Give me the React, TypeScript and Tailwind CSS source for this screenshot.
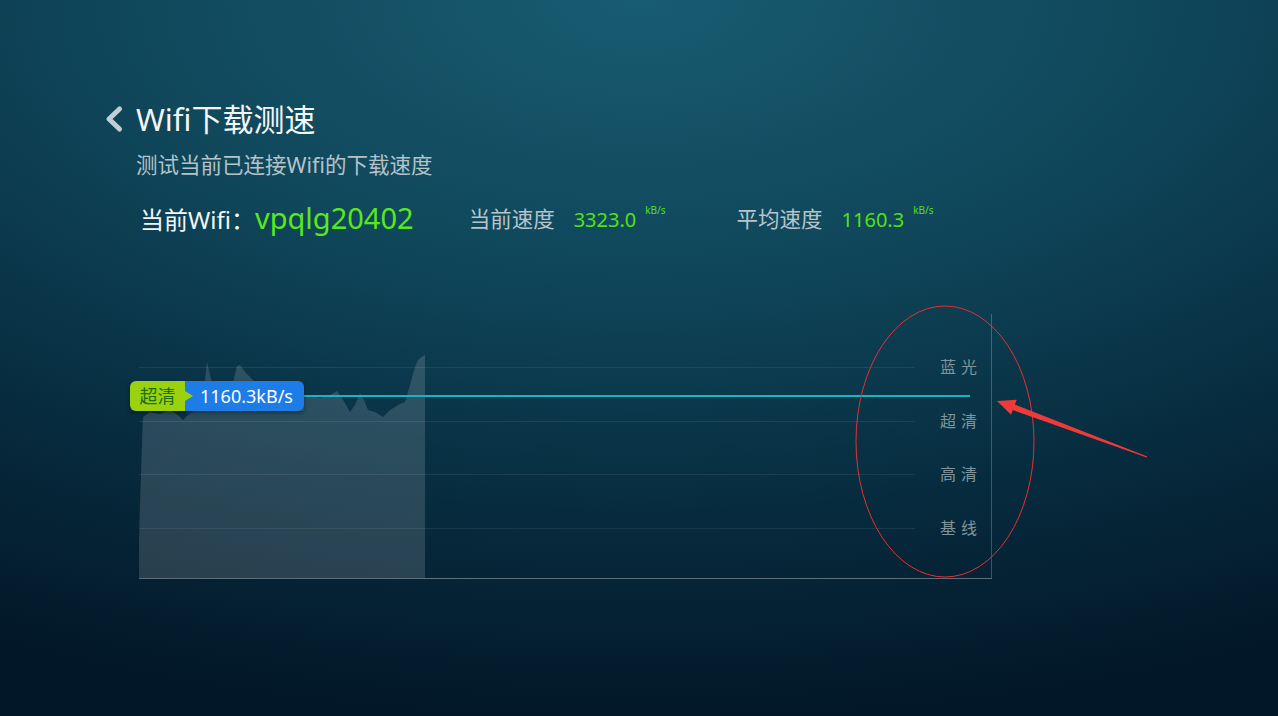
import React from 'react'

const profile: [number, number][] = [
  [139, 578], [139, 540], [140, 505], [141, 475], [142, 440], [143, 417], [150, 412], [160, 414],
  [170, 410], [178, 415], [183, 420], [190, 413], [200, 408], [205, 380], [207, 362], [210, 375],
  [215, 395], [222, 405], [230, 395], [237, 366], [240, 365], [245, 372], [253, 380], [260, 395],
  [270, 400], [285, 398], [300, 400], [310, 396], [320, 398], [330, 395], [337, 391], [342, 398],
  [350, 412], [355, 405], [360, 393], [364, 400], [368, 410], [375, 412], [383, 417], [390, 410],
  [395, 407], [400, 404], [405, 402], [410, 385], [414, 370], [417, 362], [420, 358], [425, 355],
  [425, 578],
]

// chart origin on the page
const OX = 139
const OY = 314

const areaPoints = profile.map(([x, y]) => `${x - OX},${y - OY}`).join(' ')

const levels = [
  { label: '蓝光', y: 53 },
  { label: '超清', y: 107 },
  { label: '高清', y: 160 },
  { label: '基线', y: 214 },
]

function SpeedChart() {
  return (
    <div className="relative ml-[139px] h-[266px] w-[853px]">
      <svg width="853" height="266" className="block">
        {levels.map(l => (
          <line key={l.label} x1="0" x2="776" y1={l.y + 0.5} y2={l.y + 0.5} stroke="#ffffff" strokeOpacity="0.08" />
        ))}
        <polygon points={areaPoints} fill="#ffffff" fillOpacity="0.14" />
        <line x1="0" x2="831" y1="82" y2="82" stroke="#1bb3c2" strokeWidth="2" />
        <line x1="852.5" x2="852.5" y1="0" y2="264" stroke="#ffffff" strokeOpacity="0.22" />
        <line x1="0" x2="853" y1="264.5" y2="264.5" stroke="#ffffff" strokeOpacity="0.35" />
      </svg>

      {levels.map(l => (
        <span
          key={l.label}
          className="absolute left-[801px] text-[16px] leading-[24px] tracking-[5px] text-[#7f949c]"
          style={{ top: l.y - 12 }}
        >
          {l.label}
        </span>
      ))}

      <div className="absolute left-[-9px] top-[67px] flex h-[30px] shadow-[0_2px_4px_rgba(0,0,0,0.35)]">
        <div className="relative flex w-[55px] items-center justify-center rounded-l-[6px] bg-[#9bd20f] text-[18px] text-[#1c6e0c]">
          超清
          <span className="absolute right-[-8px] top-[10px] h-0 w-0 border-y-[5px] border-l-[8px] border-y-transparent border-l-[#9bd20f]" />
        </div>
        <div className="flex w-[119px] items-center justify-center rounded-r-[6px] bg-[#1d7ce6] pl-[4px] text-[18px] text-white">
          1160.3kB/s
        </div>
      </div>
    </div>
  )
}

function Stat({ label, value, gap }: { label: string; value: string; gap: string }) {
  return (
    <div className={`relative top-[-2px] flex items-baseline ${gap}`}>
      <span className="text-[21.5px] text-[#b6c5ca]">{label}</span>
      <span className="ml-[19px] text-[20px] text-[#55e014]">{value}</span>
      <span className="ml-[9px] self-start pt-[4px] text-[10px] leading-[10px] text-[#55e014]">kB/s</span>
    </div>
  )
}

export default function App() {
  return (
    <div className="relative h-[716px] w-[1278px] overflow-hidden bg-[radial-gradient(ellipse_110%_100%_at_50%_0%,#185c71_0%,#0f4559_40%,#072b3e_72%,#021828_100%)] font-['Noto_Sans','Noto_Sans_CJK_SC',sans-serif]">
      <div className="pl-[104px] pt-[99px]">
        <div className="flex items-center">
          <svg width="20" height="28" viewBox="0 0 20 28" className="shrink-0">
            <path d="M15.5 4 L5 14 L15.5 24" fill="none" stroke="#c4cfd3" strokeWidth="5" strokeLinecap="round" strokeLinejoin="round" />
          </svg>
          <h1 className="ml-[12px] text-[31px] leading-[40px] text-[#f3f6f7]">Wifi下载测速</h1>
        </div>
        <p className="ml-[32px] mt-[11px] text-[21.5px] leading-[30px] text-[#b4c3c8]">测试当前已连接Wifi的下载速度</p>
        <div className="ml-[36px] mt-[20px] flex items-baseline leading-[36px]">
          <span className="text-[24px] text-[#f3f6f7]">当前Wifi：</span>
          <span className="text-[29px] text-[#5ae81b]">vpqlg20402</span>
          <Stat label="当前速度" value="3323.0" gap="ml-[55px]" />
          <Stat label="平均速度" value="1160.3" gap="ml-[71px]" />
        </div>
      </div>

      <div className="mt-[74px]">
        <SpeedChart />
      </div>

      <svg width="1278" height="716" className="pointer-events-none absolute left-0 top-0">
        <ellipse cx="945" cy="441.5" rx="89" ry="135.5" fill="none" stroke="#e8302f" strokeWidth="1" />
        <polygon
          points="997,401 1016.7,399.8 1014.9,404.5 1147.2,456.6 1146.8,457.4 1012.8,410.1 1011.1,414.8"
          fill="#f03a37"
        />
      </svg>
    </div>
  )
}
